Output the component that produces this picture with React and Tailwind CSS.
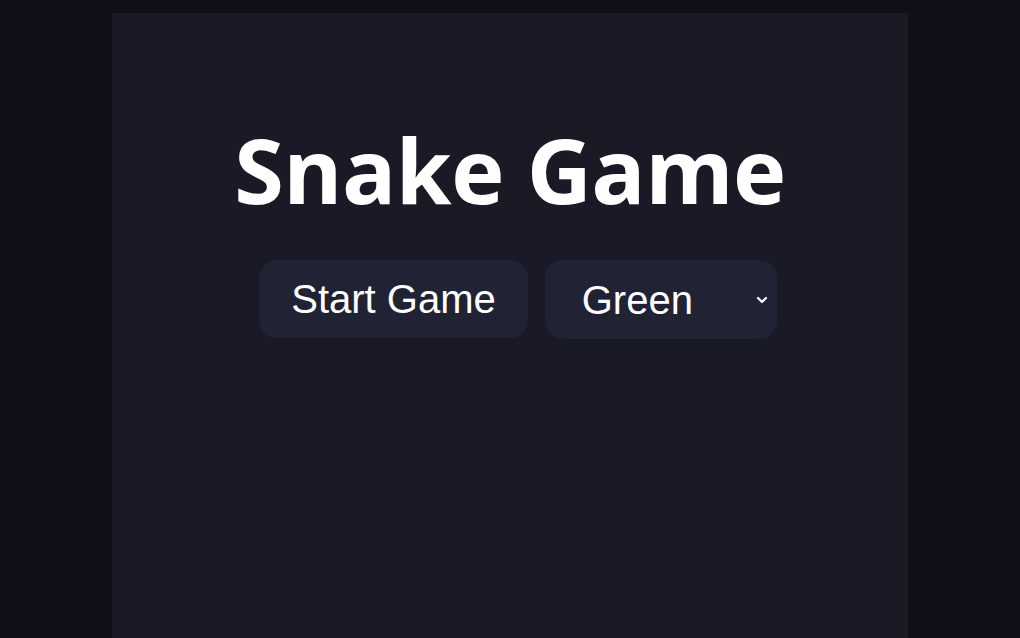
import { useState } from "react";

function ChevronDown() {
  return (
    <svg width="12" height="8" viewBox="0 0 12 8" className="pointer-events-none absolute right-[9px] top-1/2 -translate-y-1/2">
      <path d="M2 2 L6 6 L10 2" fill="none" stroke="white" strokeWidth="2.2" strokeLinecap="round" strokeLinejoin="round" />
    </svg>
  );
}

export default function App() {
  const [color, setColor] = useState("green");

  return (
    <div className="min-h-[638px] bg-[#100f18] flex justify-center pt-[13px]">
      <main className="w-[796px] min-h-[625px] bg-[#1a1a26] flex flex-col items-center pt-[99px]">
        <h1 className="text-white font-bold text-[90px] leading-[114px] tracking-[-0.5px] font-['Open_Sans',sans-serif]">
          Snake Game
        </h1>
        <div className="mt-[34px] ml-[16px] flex gap-[17px] font-['Liberation_Sans',Arial,sans-serif]">
          <button className="h-[78px] px-[32px] rounded-[18px] bg-[#1f2334] text-white text-[40px]">
            Start Game
          </button>
          <div className="relative">
            <select
              value={color}
              onChange={(e) => setColor(e.target.value)}
              className="appearance-none h-[79px] w-[232px] pl-[37px] rounded-[18px] bg-[#1f2334] text-white text-[40px] outline-none"
            >
              <option value="green">Green</option>
              <option value="blue">Blue</option>
              <option value="red">Red</option>
            </select>
            <ChevronDown />
          </div>
        </div>
      </main>
    </div>
  );
}
